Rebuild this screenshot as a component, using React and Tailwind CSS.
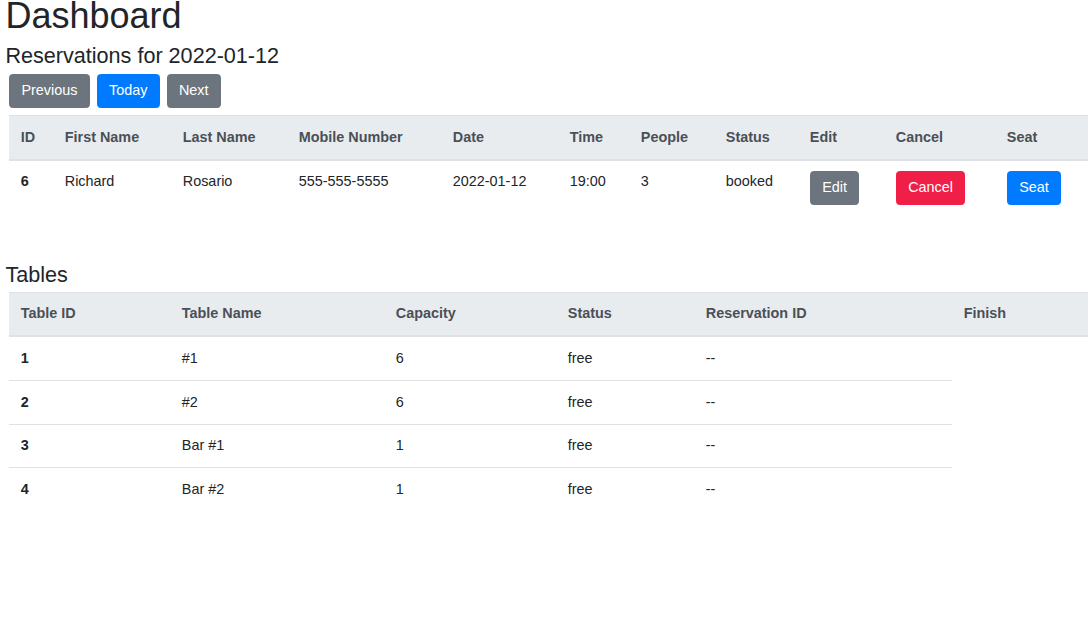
import React from "react";

const reservations = [
  {
    id: 6,
    first: "Richard",
    last: "Rosario",
    mobile: "555-555-5555",
    date: "2022-01-12",
    time: "19:00",
    people: 3,
    status: "booked",
  },
];

const tables = [
  { id: 1, name: "#1", capacity: 6, status: "free" },
  { id: 2, name: "#2", capacity: 6, status: "free" },
  { id: 3, name: "Bar #1", capacity: 1, status: "free" },
  { id: 4, name: "Bar #2", capacity: 1, status: "free" },
];

const resCols = [44, 118, 116, 154, 117, 71, 85, 84, 86, 111, 93];
const resHeads = ["ID", "First Name", "Last Name", "Mobile Number", "Date", "Time", "People", "Status", "Edit", "Cancel", "Seat"];
const tableCols = [161, 214, 172, 138, 258, 136];
const tableHeads = ["Table ID", "Table Name", "Capacity", "Status", "Reservation ID", "Finish"];

const th =
  "text-left align-bottom font-bold text-[#495057] bg-[#e9ecef] border-t border-b-2 border-[#dee2e6] pl-[11.8px] pr-[10.8px] py-[10.5px] leading-[21.6px]";
const td = "align-top border-t border-[#dee2e6] pl-[11.8px] pr-[10.8px] py-[10.5px] leading-[21.6px]";
const btn =
  "h-[34px] px-[11.4px] rounded-[3.6px] text-white text-[14.4px] leading-[21.6px] border";

function Dashboard() {
  return (
    <div className="font-['Liberation_Sans',Arial,sans-serif] text-[#212529] pl-[5.4px] bg-white min-h-screen">
      <h1 className="text-[36px] leading-[31px] font-normal mb-[11.9px]">Dashboard</h1>
      <h4 className="text-[21.6px] leading-[1.2] font-normal">Reservations for 2022-01-12</h4>
      <div className="flex gap-[6.8px] pl-[3.6px] mt-[5.2px]">
        <button className={`${btn} bg-[#6c757d] border-[#6c757d]`}>Previous</button>
        <button className={`${btn} bg-[#007bff] border-[#007bff]`}>Today</button>
        <button className={`${btn} bg-[#6c757d] border-[#6c757d]`}>Next</button>
      </div>

      <table className="table-fixed border-collapse w-[1079px] ml-[3.6px] mt-[7.1px] text-[14.4px]">
        <colgroup>
          {resCols.map((w, i) => (
            <col key={i} style={{ width: w }} />
          ))}
        </colgroup>
        <thead>
          <tr>
            {resHeads.map((h) => (
              <th key={h} className={th}>
                {h}
              </th>
            ))}
          </tr>
        </thead>
        <tbody>
          {reservations.map((r) => (
            <tr key={r.id}>
              <th className={`${td} text-left font-bold`}>{r.id}</th>
              <td className={td}>{r.first}</td>
              <td className={td}>{r.last}</td>
              <td className={td}>{r.mobile}</td>
              <td className={td}>{r.date}</td>
              <td className={td}>{r.time}</td>
              <td className={td}>{r.people}</td>
              <td className={td}>{r.status}</td>
              <td className={td}>
                <button className={`${btn} bg-[#6c757d] border-[#6c757d]`}>Edit</button>
              </td>
              <td className={td}>
                <button className={`${btn} bg-[#ef1f48] border-[#ef1f48]`}>Cancel</button>
              </td>
              <td className={td}>
                <button className={`${btn} bg-[#007bff] border-[#007bff]`}>Seat</button>
              </td>
            </tr>
          ))}
        </tbody>
      </table>

      <h4 className="text-[21.6px] leading-[1.2] font-normal mt-[46.5px]">Tables</h4>
      <table className="table-fixed border-collapse w-[1079px] ml-[3.6px] mt-[3.8px] text-[14.4px]">
        <colgroup>
          {tableCols.map((w, i) => (
            <col key={i} style={{ width: w }} />
          ))}
        </colgroup>
        <thead>
          <tr>
            {tableHeads.map((h) => (
              <th key={h} className={th}>
                {h}
              </th>
            ))}
          </tr>
        </thead>
        <tbody>
          {tables.map((t) => (
            <tr key={t.id}>
              <th className={`${td} text-left font-bold`}>{t.id}</th>
              <td className={td}>{t.name}</td>
              <td className={td}>{t.capacity}</td>
              <td className={td}>{t.status}</td>
              <td className={td}>--</td>
            </tr>
          ))}
        </tbody>
      </table>
    </div>
  );
}

export default function App() {
  return <Dashboard />;
}
